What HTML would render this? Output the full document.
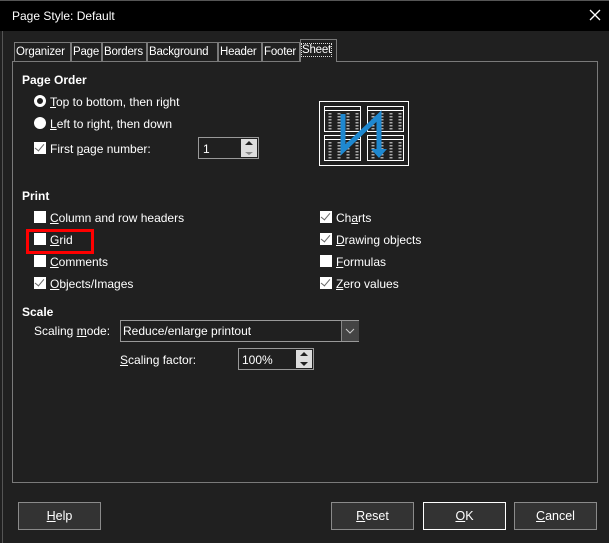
<!DOCTYPE html><html><head><style>
body{margin:0;width:609px;height:543px;background:#202020;font-family:"Liberation Sans",sans-serif;font-size:12px;color:#fff;position:relative;overflow:hidden}
.a{position:absolute;white-space:nowrap}
.cb{position:absolute;width:12px;height:12px;background:#fff;box-sizing:border-box}
.cb.k::after{content:"";position:absolute;left:3px;top:0px;width:4px;height:8px;border:solid #666;border-width:0 1.5px 1.5px 0;transform:rotate(40deg)}
.tab{position:absolute;top:42px;height:19px;border:1px solid #7a7a7a;border-bottom:none;box-sizing:border-box;padding:3px 0 0 1px;font-size:11.5px;letter-spacing:-0.2px;overflow:hidden}
.btn{position:absolute;top:502px;height:28px;border:1px solid #8a8a8a;background:#333;box-sizing:border-box;text-align:center;line-height:26px;font-size:12.5px}
u{text-decoration:underline}
b{font-weight:bold}
</style></head><body>
<div class="a" style="left:0;top:0;width:609px;height:31px;background:#000;border-top:1px solid #555;box-sizing:border-box"></div>
<div class="a" style="left:12px;top:9px;font-size:12px">Page Style: Default</div>
<svg class="a" style="left:589px;top:9px" width="12" height="12"><path d="M1 1L11 11M11 1L1 11" stroke="#fff" stroke-width="1.3"/></svg>
<div class="a" style="left:2px;top:31px;width:1px;height:512px;background:#555"></div>
<div class="a" style="left:12px;top:61px;width:586px;height:422px;border:1px solid #7a7a7a;box-sizing:border-box"></div>
<div class="tab" style="left:14px;width:57px">Organizer</div>
<div class="tab" style="left:71px;width:31px">Page</div>
<div class="tab" style="left:102px;width:45px">Borders</div>
<div class="tab" style="left:147px;width:71px">Background</div>
<div class="tab" style="left:218px;width:44px">Header</div>
<div class="tab" style="left:262px;width:38px">Footer</div>
<div class="tab" style="left:300px;top:39px;height:23px;width:37px;background:#202020;padding-top:4px"><span style="outline:1px dotted #ddd">Sheet</span></div>
<div class="a" style="left:22px;top:73px"><b>Page Order</b></div>
<div class="a" style="left:34px;top:95px;width:12px;height:12px;border-radius:50%;border:3px solid #fff;box-sizing:border-box;background:#202020"></div>
<div class="a" style="left:50px;top:95px"><u>T</u>op to bottom, then right</div>
<div class="a" style="left:34px;top:117px;width:12px;height:12px;border-radius:50%;background:#fff"></div>
<div class="a" style="left:50px;top:117px"><u>L</u>eft to right, then down</div>
<div class="cb k" style="left:34px;top:142px"></div>
<div class="a" style="left:50px;top:142px">First <u>p</u>age number:</div>
<div class="a" style="left:198px;top:137px;width:61px;height:22px;border:1px solid #999;background:#202020;box-sizing:border-box"></div>
<div class="a" style="left:203px;top:142px">1</div>
<div class="a" style="left:241px;top:139px;width:16px;height:18px;background:#ddd"></div>
<div class="a" style="left:245px;top:141px;border:4px solid transparent;border-bottom:4px solid #222;border-top:0"></div>
<div class="a" style="left:245px;top:152px;border:4px solid transparent;border-top:3px solid #888;border-bottom:0"></div>
<svg class="a" style="left:319px;top:101px" width="90" height="65">
<rect x="0.5" y="0.5" width="89" height="64" fill="none" stroke="#fff"/>
<g fill="none" stroke="#fff"><rect x="5.5" y="5.5" width="36" height="25"/><rect x="48.5" y="5.5" width="36" height="25"/><rect x="5.5" y="34.5" width="36" height="25"/><rect x="48.5" y="34.5" width="36" height="25"/></g>
<g stroke="#aaa" stroke-dasharray="1.5,1.5"><path d="M11 12V29M20 12V29M29 12V29M38 12V29M54 12V29M63 12V29M72 12V29M81 12V29M11 41V58M20 41V58M29 41V58M38 41V58M54 41V58M63 41V58M72 41V58M81 41V58" stroke-width="3"/></g>
<path d="M5 9.5H42M48 9.5H85M5 38.5H42M48 38.5H85" stroke="#fff"/>
<path d="M24 13V49L60 15V50" fill="none" stroke="#1e88d0" stroke-width="5" stroke-linejoin="miter"/>
<path d="M52 48L60 57L68 48Z" fill="#1e88d0"/>
</svg>
<div class="a" style="left:22px;top:189px"><b>Print</b></div>
<div class="cb" style="left:34px;top:211px"></div><div class="a" style="left:50px;top:211px"><u>C</u>olumn and row headers</div>
<div class="cb" style="left:34px;top:233px"></div><div class="a" style="left:50px;top:233px"><u>G</u>rid</div>
<div class="a" style="left:26px;top:229px;width:68px;height:25px;border:3px solid #f00;box-sizing:border-box"></div>
<div class="cb" style="left:34px;top:255px"></div><div class="a" style="left:50px;top:255px"><u>C</u>omments</div>
<div class="cb k" style="left:34px;top:277px"></div><div class="a" style="left:50px;top:277px"><u>O</u>bjects/Images</div>
<div class="cb k" style="left:320px;top:211px"></div><div class="a" style="left:336px;top:211px">Ch<u>a</u>rts</div>
<div class="cb k" style="left:320px;top:233px"></div><div class="a" style="left:336px;top:233px"><u>D</u>rawing objects</div>
<div class="cb" style="left:320px;top:255px"></div><div class="a" style="left:336px;top:255px"><u>F</u>ormulas</div>
<div class="cb k" style="left:320px;top:277px"></div><div class="a" style="left:336px;top:277px"><u>Z</u>ero values</div>
<div class="a" style="left:22px;top:305px"><b>Scale</b></div>
<div class="a" style="left:34px;top:324px">Scaling <u>m</u>ode:</div>
<div class="a" style="left:120px;top:320px;width:239px;height:22px;border:1px solid #999;box-sizing:border-box"></div>
<div class="a" style="left:123px;top:324px">Reduce/enlarge printout</div>
<div class="a" style="left:341px;top:321px;width:17px;height:20px;background:#444;border-left:1px solid #888"></div>
<svg class="a" style="left:345px;top:328px" width="10" height="6"><path d="M1 1L5 5L9 1" stroke="#ccc" fill="none"/></svg>
<div class="a" style="left:120px;top:353px"><u>S</u>caling factor:</div>
<div class="a" style="left:238px;top:348px;width:76px;height:22px;border:1px solid #999;box-sizing:border-box"></div>
<div class="a" style="left:242px;top:353px">100%</div>
<div class="a" style="left:296px;top:350px;width:16px;height:18px;background:#ddd"></div>
<div class="a" style="left:300px;top:352px;border:4px solid transparent;border-bottom:4px solid #222;border-top:0"></div>
<div class="a" style="left:300px;top:362px;border:4px solid transparent;border-top:4px solid #222;border-bottom:0"></div>
<div class="btn" style="left:18px;width:83px"><u>H</u>elp</div>
<div class="btn" style="left:331px;width:83px"><u>R</u>eset</div>
<div class="btn" style="left:423px;width:83px;border-color:#fff"><u>O</u>K</div>
<div class="btn" style="left:514px;width:83px"><u>C</u>ancel</div>
</body></html>
